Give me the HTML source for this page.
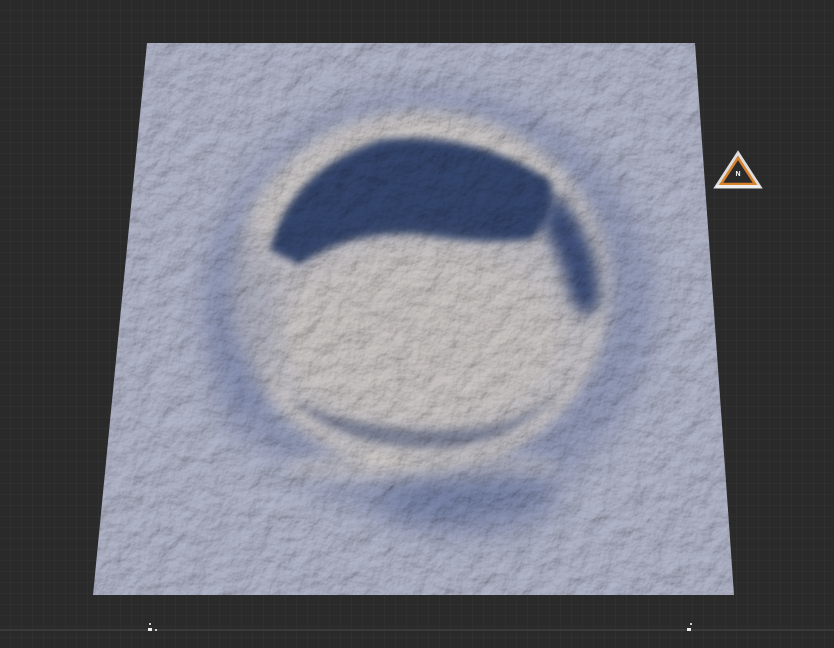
<!DOCTYPE html>
<html><head><meta charset="utf-8"><style>
html,body{margin:0;padding:0;background:#2a2a2b;overflow:hidden}
svg{display:block}
</style></head><body>
<svg width="834" height="648" viewBox="0 0 834 648" xmlns="http://www.w3.org/2000/svg">
<defs>
<pattern id="g" width="11" height="11" patternUnits="userSpaceOnUse">
<path d="M11 0V11M0 11H11" stroke="#343435" stroke-width="1" fill="none"/>
</pattern>
<clipPath id="c"><polygon points="147,43 695,43 734,595 93,595"/></clipPath>
<filter id="t" x="0" y="0" width="100%" height="100%">
<feTurbulence type="fractalNoise" baseFrequency="0.05" numOctaves="4" seed="3"/>
<feDiffuseLighting lighting-color="#ffffff" surfaceScale="3"><feDistantLight azimuth="60" elevation="45"/></feDiffuseLighting>
</filter>
<filter id="b8" x="-50%" y="-50%" width="200%" height="200%"><feGaussianBlur stdDeviation="8"/></filter>
<filter id="b14" x="-50%" y="-50%" width="200%" height="200%"><feGaussianBlur stdDeviation="14"/></filter>
<filter id="b4" x="-50%" y="-50%" width="200%" height="200%"><feGaussianBlur stdDeviation="4"/></filter>
</defs>
<rect width="834" height="648" fill="#2a2a2b"/>
<rect width="834" height="648" fill="url(#g)"/>
<rect x="0" y="629" width="834" height="2" fill="#3a3a3b"/>
<g clip-path="url(#c)">
<rect x="90" y="40" width="650" height="560" fill="#b4b8cc"/>
<ellipse cx="430" cy="305" rx="225" ry="215" fill="#7482ac" opacity="0.5" filter="url(#b14)"/>
<ellipse cx="420" cy="290" rx="190" ry="180" fill="#e6ddd0" opacity="0.7" filter="url(#b8)"/>
<ellipse cx="428" cy="305" rx="170" ry="163" fill="#c4c2c8" filter="url(#b4)"/>
<path d="M270,250 Q290,170 380,140 Q470,130 550,180 Q560,215 530,240 Q470,245 420,235 Q350,230 300,265 Z" fill="#34466f" filter="url(#b4)"/>
<path d="M555,190 Q600,240 600,300 Q590,330 570,300 Q560,250 540,225 Z" fill="#3e4f7c" filter="url(#b8)"/>
<ellipse cx="420" cy="335" rx="140" ry="90" fill="#d6cfc6" opacity="0.5" filter="url(#b14)"/>
<path d="M290,400 Q350,450 440,450 Q520,440 560,390 Q520,430 440,430 Q360,430 290,400Z" fill="#2f3d66" opacity="0.45" filter="url(#b4)"/>
<ellipse cx="420" cy="468" rx="140" ry="16" fill="#e8e0d4" opacity="0.5" filter="url(#b8)"/>
<ellipse cx="470" cy="500" rx="90" ry="35" fill="#5a6a98" opacity="0.45" filter="url(#b14)"/>
<ellipse cx="240" cy="330" rx="30" ry="110" fill="#7a86ae" opacity="0.4" filter="url(#b14)"/>
<rect x="90" y="40" width="650" height="560" filter="url(#t)" opacity="0.6" style="mix-blend-mode:multiply"/>
</g>
<g transform="translate(738,171)">
<polygon points="0,-18 22,16 -22,16" fill="#2a2a2b" stroke="#ddd" stroke-width="3"/>
<polygon points="0,-13 17,13 -17,13" fill="none" stroke="#d9822b" stroke-width="2.5"/>
<rect x="-22" y="14" width="44" height="3" fill="#eee"/>
<text x="0" y="5" font-family="Liberation Sans,sans-serif" font-size="7" font-weight="bold" fill="#fff" text-anchor="middle">N</text>
</g>
<rect x="149" y="623" width="2" height="2" fill="#ccc"/>
<rect x="148" y="628" width="4" height="3" fill="#eee"/>
<rect x="155" y="629" width="2" height="2" fill="#ccc"/>
<rect x="690" y="623" width="2" height="2" fill="#ccc"/>
<rect x="687" y="628" width="4" height="3" fill="#eee"/>
</svg>
</body></html>
